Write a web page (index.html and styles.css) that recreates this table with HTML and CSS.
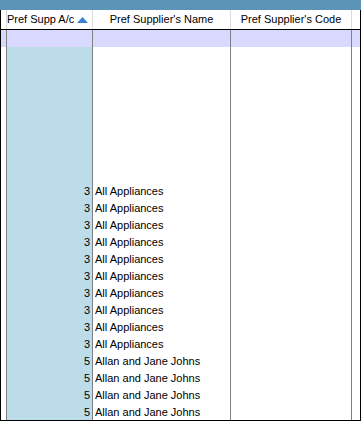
FILE: index.html
```html
<!DOCTYPE html>
<html>
<head>
<meta charset="utf-8">
<link rel="stylesheet" href="styles.css">
</head>
<body>
<div class="view">
  <div class="titlebar"></div>
  <div class="frame">
    <div class="header">
      <div class="hcell sel"></div>
      <div class="hcell c1"><span>Pref Supp A/c</span><svg class="arrow" width="11" height="6" viewBox="0 0 11 6"><polygon points="0,6 5.5,0 11,6" fill="#3a80d2"/></svg></div>
      <div class="hcell c2 center">Pref Supplier's Name</div>
      <div class="hcell c3 center">Pref Supplier's Code</div>
      <div class="hcell fill"></div>
    </div>
    <div class="body">
      <div class="row new"><div class="cell"></div><div class="cell"></div><div class="cell"></div><div class="cell"></div><div class="cell fill"></div></div>
      <div class="row"><div class="cell"></div><div class="cell num"></div><div class="cell"></div><div class="cell"></div><div class="cell fill"></div></div>
      <div class="row"><div class="cell"></div><div class="cell num"></div><div class="cell"></div><div class="cell"></div><div class="cell fill"></div></div>
      <div class="row"><div class="cell"></div><div class="cell num"></div><div class="cell"></div><div class="cell"></div><div class="cell fill"></div></div>
      <div class="row"><div class="cell"></div><div class="cell num"></div><div class="cell"></div><div class="cell"></div><div class="cell fill"></div></div>
      <div class="row"><div class="cell"></div><div class="cell num"></div><div class="cell"></div><div class="cell"></div><div class="cell fill"></div></div>
      <div class="row"><div class="cell"></div><div class="cell num"></div><div class="cell"></div><div class="cell"></div><div class="cell fill"></div></div>
      <div class="row"><div class="cell"></div><div class="cell num"></div><div class="cell"></div><div class="cell"></div><div class="cell fill"></div></div>
      <div class="row"><div class="cell"></div><div class="cell num"></div><div class="cell"></div><div class="cell"></div><div class="cell fill"></div></div>
      <div class="row"><div class="cell"></div><div class="cell num">3</div><div class="cell">All Appliances</div><div class="cell"></div><div class="cell fill"></div></div>
      <div class="row"><div class="cell"></div><div class="cell num">3</div><div class="cell">All Appliances</div><div class="cell"></div><div class="cell fill"></div></div>
      <div class="row"><div class="cell"></div><div class="cell num">3</div><div class="cell">All Appliances</div><div class="cell"></div><div class="cell fill"></div></div>
      <div class="row"><div class="cell"></div><div class="cell num">3</div><div class="cell">All Appliances</div><div class="cell"></div><div class="cell fill"></div></div>
      <div class="row"><div class="cell"></div><div class="cell num">3</div><div class="cell">All Appliances</div><div class="cell"></div><div class="cell fill"></div></div>
      <div class="row"><div class="cell"></div><div class="cell num">3</div><div class="cell">All Appliances</div><div class="cell"></div><div class="cell fill"></div></div>
      <div class="row"><div class="cell"></div><div class="cell num">3</div><div class="cell">All Appliances</div><div class="cell"></div><div class="cell fill"></div></div>
      <div class="row"><div class="cell"></div><div class="cell num">3</div><div class="cell">All Appliances</div><div class="cell"></div><div class="cell fill"></div></div>
      <div class="row"><div class="cell"></div><div class="cell num">3</div><div class="cell">All Appliances</div><div class="cell"></div><div class="cell fill"></div></div>
      <div class="row"><div class="cell"></div><div class="cell num">3</div><div class="cell">All Appliances</div><div class="cell"></div><div class="cell fill"></div></div>
      <div class="row"><div class="cell"></div><div class="cell num">5</div><div class="cell">Allan and Jane Johns</div><div class="cell"></div><div class="cell fill"></div></div>
      <div class="row"><div class="cell"></div><div class="cell num">5</div><div class="cell">Allan and Jane Johns</div><div class="cell"></div><div class="cell fill"></div></div>
      <div class="row"><div class="cell"></div><div class="cell num">5</div><div class="cell">Allan and Jane Johns</div><div class="cell"></div><div class="cell fill"></div></div>
      <div class="row"><div class="cell"></div><div class="cell num">5</div><div class="cell">Allan and Jane Johns</div><div class="cell"></div><div class="cell fill"></div></div>
    </div>
  </div>
</div>
</body>
</html>
```
FILE: styles.css
```css
* { box-sizing: border-box; }
html, body { margin: 0; padding: 0; background: #ffffff; }
body {
  font-family: "Liberation Sans", Arial, sans-serif;
  font-size: 11px;
  color: #000000;
}
.view {
  width: 361px;
  height: 422px;
  display: flex;
  flex-direction: column;
}
.titlebar {
  height: 10px;
  background: #5b94b7;
  flex: none;
}
.frame {
  height: 411px;
  border: 1px solid #000000;
  border-top: none;
  overflow: hidden;
  display: flex;
  flex-direction: column;
}
.header, .row {
  display: grid;
  grid-template-columns: 6px 86px 138px 121px 1fr;
}
.header {
  height: 20px;
  border-bottom: 1px solid #000000;
  flex: none;
}
.hcell {
  border-right: 1px solid #dcdcdc;
  display: flex;
  align-items: center;
  white-space: nowrap;
  overflow: hidden;
  padding-bottom: 1px;
}
.hcell.c1 { padding-left: 0; gap: 3px; }
.hcell.center { justify-content: center; }
.hcell.fill { border-right: none; }
.arrow { flex: none; margin-top: 1px; }
.body {
  flex: 1;
  display: flex;
  flex-direction: column;
  overflow: hidden;
}
.row { height: 17px; flex: none; }
.cell {
  border-right: 1px solid #808080;
  white-space: nowrap;
  overflow: hidden;
  line-height: 17px;
  padding-left: 2px;
}
.cell.fill { border-right: none; }
.cell.num {
  background: #bcdcea;
  text-align: right;
  padding-right: 2px;
  padding-left: 0;
}
.row.new { background: #d9d9ff; }
.row.new .cell.num, .row.new .cell { background: #d9d9ff; }
```
